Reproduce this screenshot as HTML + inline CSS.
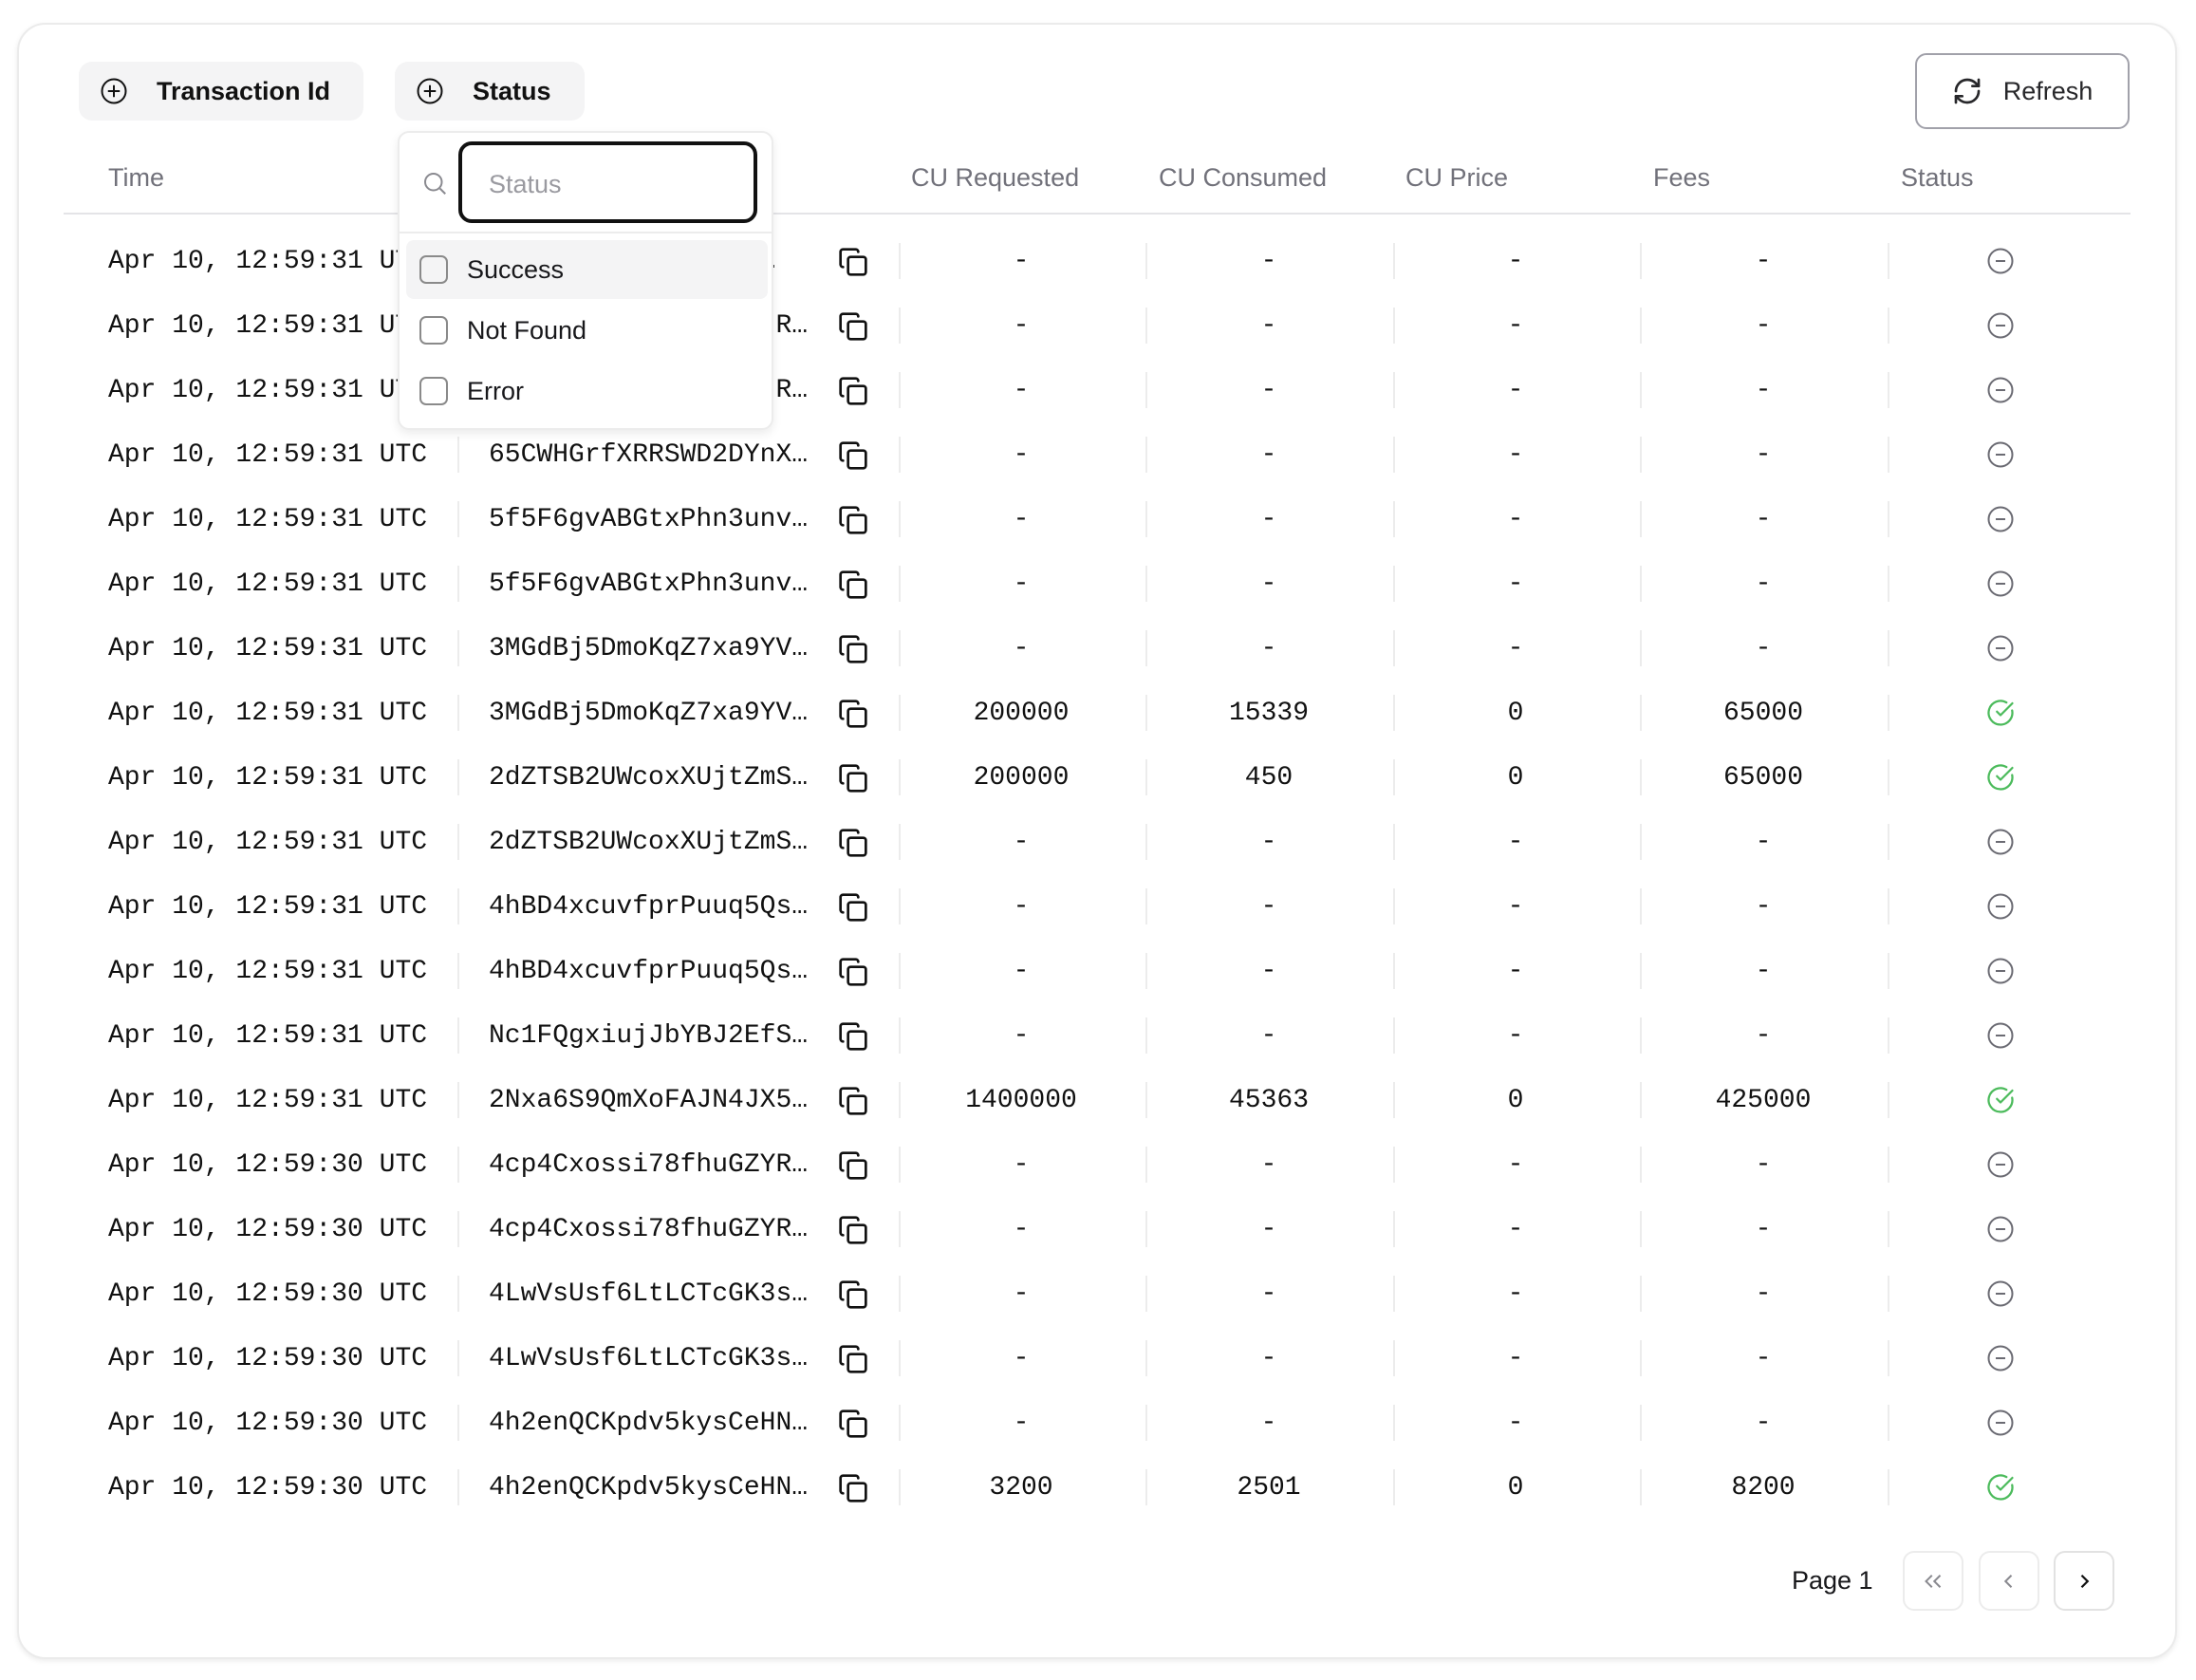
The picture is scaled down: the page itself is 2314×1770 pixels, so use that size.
<!DOCTYPE html>
<html><head><meta charset="utf-8"><style>
*{box-sizing:border-box;margin:0;padding:0}
body{width:2314px;height:1770px;background:#fff;position:relative;overflow:hidden;font-family:"Liberation Sans",sans-serif;color:#18181b}
.card{position:absolute;left:18px;top:24px;width:2276px;height:1724px;border:2px solid #ebebeb;border-radius:30px;box-shadow:0 2px 6px rgba(0,0,0,.08);background:#fff}
.chip{position:absolute;top:65px;height:62px;background:#f4f4f5;border-radius:14px;font-size:27px;font-weight:bold;display:flex;align-items:center;color:#111}
.chip svg{margin:0 30px 0 22px}
.btn{position:absolute;left:2018px;top:56px;width:226px;height:80px;border:2px solid #a1a1aa;border-radius:12px;font-size:27px;display:flex;align-items:center;justify-content:center;gap:22px;color:#27272a}
.hd{position:absolute;top:172px;font-size:27px;color:#71717a}
.hline{position:absolute;left:67px;top:224px;width:2178px;height:2px;background:#e4e4e7}
.row{position:absolute;left:0;width:2314px;height:68px}
.row span{position:absolute;top:20px;font-family:"Liberation Mono",monospace;font-size:28px;line-height:30px;color:#111}
.t{left:114px}.id{left:515px}
.c{width:200px;text-align:center}
.sep{position:absolute;top:15px;width:2px;height:38px;background:#ececec}
.row svg{position:absolute;top:19px}
.dd{position:absolute;left:419px;top:138px;width:396px;height:315px;background:#fff;border:2px solid #ececec;border-radius:12px;box-shadow:0 4px 10px rgba(0,0,0,.08)}
.inp{position:absolute;left:65px;top:9px;width:315px;height:86px;border:4px solid #111;border-radius:14px;font-size:27px;color:#9a9aa0;padding:26px 0 0 28px}
.item{position:absolute;left:7px;width:381px;height:62px;border-radius:8px;font-size:27px;display:flex;align-items:center}
.cb{width:30px;height:30px;border:2px solid #8a8a8a;border-radius:7px;margin:0 20px 0 17px}
.pb{position:absolute;top:1634px;width:64px;height:63px;border:2px solid #ececec;border-radius:12px;display:flex;align-items:center;justify-content:center}
</style></head><body>
<div class="card"></div>
<div class="chip" style="left:83px;width:300px"><svg width="30" height="30" viewBox="0 0 24 24" fill="none" stroke="#111" stroke-width="1.6"><circle cx="12" cy="12" r="10"/><path d="M12 7v10M7 12h10"/></svg>Transaction Id</div>
<div class="chip" style="left:416px;width:200px"><svg width="30" height="30" viewBox="0 0 24 24" fill="none" stroke="#111" stroke-width="1.6"><circle cx="12" cy="12" r="10"/><path d="M12 7v10M7 12h10"/></svg>Status</div>
<div class="btn"><svg width="32" height="32" viewBox="0 0 24 24" fill="none" stroke="#27272a" stroke-width="2" stroke-linecap="round" stroke-linejoin="round"><path d="M3 12a9 9 0 0 1 9-9 9.75 9.75 0 0 1 6.74 2.74L21 8"/><path d="M21 3v5h-5"/><path d="M21 12a9 9 0 0 1-9 9 9.75 9.75 0 0 1-6.74-2.74L3 16"/><path d="M8 16H3v5"/></svg>Refresh</div>
<div class="hd" style="left:114px">Time</div>
<div class="hd" style="left:960px">CU Requested</div>
<div class="hd" style="left:1221px">CU Consumed</div>
<div class="hd" style="left:1481px">CU Price</div>
<div class="hd" style="left:1742px">Fees</div>
<div class="hd" style="left:2003px">Status</div>
<div class="hline"></div>
<svg width="0" height="0" style="position:absolute"><defs>
<symbol id="cp" viewBox="0 0 24 24"><g fill="none" stroke="#111" stroke-width="2" stroke-linecap="round" stroke-linejoin="round"><rect x="8" y="8" width="14" height="14" rx="2"/><path d="M4 16c-1.1 0-2-.9-2-2V4c0-1.1.9-2 2-2h10c1.1 0 2 .9 2 2"/></g></symbol>
<symbol id="mn" viewBox="0 0 24 24"><g fill="none" stroke="#6b6b73" stroke-width="1.6"><circle cx="12" cy="12" r="10"/><path d="M8 12h8"/></g></symbol>
<symbol id="ok" viewBox="0 0 24 24"><g fill="none" stroke="#4cbb5c" stroke-width="1.8" stroke-linecap="round" stroke-linejoin="round"><path d="M21.8 10A10 10 0 1 1 17 3.3"/><path d="m9 11 3 3L22 4"/></g></symbol>
</defs></svg>
<div class="row" style="top:241px"><span class="t">Apr 10, 12:59:31 UTC</span><div class="sep" style="left:482px"></div><span class="id">4vJ9JU1bWWE2XfZPo…</span><svg style="left:883px" width="32" height="32"><use href="#cp"/></svg><div class="sep" style="left:947px"></div><span class="c" style="left:976px">-</span><div class="sep" style="left:1207px"></div><span class="c" style="left:1237px">-</span><div class="sep" style="left:1468px"></div><span class="c" style="left:1497px">-</span><div class="sep" style="left:1728px"></div><span class="c" style="left:1758px">-</span><div class="sep" style="left:1989px"></div><svg style="left:2093px" width="30" height="30"><use href="#mn"/></svg></div>
<div class="row" style="top:309px"><span class="t">Apr 10, 12:59:31 UTC</span><div class="sep" style="left:482px"></div><span class="id">65CWHGrfXRRSWD2DYnR…</span><svg style="left:883px" width="32" height="32"><use href="#cp"/></svg><div class="sep" style="left:947px"></div><span class="c" style="left:976px">-</span><div class="sep" style="left:1207px"></div><span class="c" style="left:1237px">-</span><div class="sep" style="left:1468px"></div><span class="c" style="left:1497px">-</span><div class="sep" style="left:1728px"></div><span class="c" style="left:1758px">-</span><div class="sep" style="left:1989px"></div><svg style="left:2093px" width="30" height="30"><use href="#mn"/></svg></div>
<div class="row" style="top:377px"><span class="t">Apr 10, 12:59:31 UTC</span><div class="sep" style="left:482px"></div><span class="id">65CWHGrfXRRSWD2DYnR…</span><svg style="left:883px" width="32" height="32"><use href="#cp"/></svg><div class="sep" style="left:947px"></div><span class="c" style="left:976px">-</span><div class="sep" style="left:1207px"></div><span class="c" style="left:1237px">-</span><div class="sep" style="left:1468px"></div><span class="c" style="left:1497px">-</span><div class="sep" style="left:1728px"></div><span class="c" style="left:1758px">-</span><div class="sep" style="left:1989px"></div><svg style="left:2093px" width="30" height="30"><use href="#mn"/></svg></div>
<div class="row" style="top:445px"><span class="t">Apr 10, 12:59:31 UTC</span><div class="sep" style="left:482px"></div><span class="id">65CWHGrfXRRSWD2DYnX…</span><svg style="left:883px" width="32" height="32"><use href="#cp"/></svg><div class="sep" style="left:947px"></div><span class="c" style="left:976px">-</span><div class="sep" style="left:1207px"></div><span class="c" style="left:1237px">-</span><div class="sep" style="left:1468px"></div><span class="c" style="left:1497px">-</span><div class="sep" style="left:1728px"></div><span class="c" style="left:1758px">-</span><div class="sep" style="left:1989px"></div><svg style="left:2093px" width="30" height="30"><use href="#mn"/></svg></div>
<div class="row" style="top:513px"><span class="t">Apr 10, 12:59:31 UTC</span><div class="sep" style="left:482px"></div><span class="id">5f5F6gvABGtxPhn3unv…</span><svg style="left:883px" width="32" height="32"><use href="#cp"/></svg><div class="sep" style="left:947px"></div><span class="c" style="left:976px">-</span><div class="sep" style="left:1207px"></div><span class="c" style="left:1237px">-</span><div class="sep" style="left:1468px"></div><span class="c" style="left:1497px">-</span><div class="sep" style="left:1728px"></div><span class="c" style="left:1758px">-</span><div class="sep" style="left:1989px"></div><svg style="left:2093px" width="30" height="30"><use href="#mn"/></svg></div>
<div class="row" style="top:581px"><span class="t">Apr 10, 12:59:31 UTC</span><div class="sep" style="left:482px"></div><span class="id">5f5F6gvABGtxPhn3unv…</span><svg style="left:883px" width="32" height="32"><use href="#cp"/></svg><div class="sep" style="left:947px"></div><span class="c" style="left:976px">-</span><div class="sep" style="left:1207px"></div><span class="c" style="left:1237px">-</span><div class="sep" style="left:1468px"></div><span class="c" style="left:1497px">-</span><div class="sep" style="left:1728px"></div><span class="c" style="left:1758px">-</span><div class="sep" style="left:1989px"></div><svg style="left:2093px" width="30" height="30"><use href="#mn"/></svg></div>
<div class="row" style="top:649px"><span class="t">Apr 10, 12:59:31 UTC</span><div class="sep" style="left:482px"></div><span class="id">3MGdBj5DmoKqZ7xa9YV…</span><svg style="left:883px" width="32" height="32"><use href="#cp"/></svg><div class="sep" style="left:947px"></div><span class="c" style="left:976px">-</span><div class="sep" style="left:1207px"></div><span class="c" style="left:1237px">-</span><div class="sep" style="left:1468px"></div><span class="c" style="left:1497px">-</span><div class="sep" style="left:1728px"></div><span class="c" style="left:1758px">-</span><div class="sep" style="left:1989px"></div><svg style="left:2093px" width="30" height="30"><use href="#mn"/></svg></div>
<div class="row" style="top:717px"><span class="t">Apr 10, 12:59:31 UTC</span><div class="sep" style="left:482px"></div><span class="id">3MGdBj5DmoKqZ7xa9YV…</span><svg style="left:883px" width="32" height="32"><use href="#cp"/></svg><div class="sep" style="left:947px"></div><span class="c" style="left:976px">200000</span><div class="sep" style="left:1207px"></div><span class="c" style="left:1237px">15339</span><div class="sep" style="left:1468px"></div><span class="c" style="left:1497px">0</span><div class="sep" style="left:1728px"></div><span class="c" style="left:1758px">65000</span><div class="sep" style="left:1989px"></div><svg style="left:2093px" width="30" height="30"><use href="#ok"/></svg></div>
<div class="row" style="top:785px"><span class="t">Apr 10, 12:59:31 UTC</span><div class="sep" style="left:482px"></div><span class="id">2dZTSB2UWcoxXUjtZmS…</span><svg style="left:883px" width="32" height="32"><use href="#cp"/></svg><div class="sep" style="left:947px"></div><span class="c" style="left:976px">200000</span><div class="sep" style="left:1207px"></div><span class="c" style="left:1237px">450</span><div class="sep" style="left:1468px"></div><span class="c" style="left:1497px">0</span><div class="sep" style="left:1728px"></div><span class="c" style="left:1758px">65000</span><div class="sep" style="left:1989px"></div><svg style="left:2093px" width="30" height="30"><use href="#ok"/></svg></div>
<div class="row" style="top:853px"><span class="t">Apr 10, 12:59:31 UTC</span><div class="sep" style="left:482px"></div><span class="id">2dZTSB2UWcoxXUjtZmS…</span><svg style="left:883px" width="32" height="32"><use href="#cp"/></svg><div class="sep" style="left:947px"></div><span class="c" style="left:976px">-</span><div class="sep" style="left:1207px"></div><span class="c" style="left:1237px">-</span><div class="sep" style="left:1468px"></div><span class="c" style="left:1497px">-</span><div class="sep" style="left:1728px"></div><span class="c" style="left:1758px">-</span><div class="sep" style="left:1989px"></div><svg style="left:2093px" width="30" height="30"><use href="#mn"/></svg></div>
<div class="row" style="top:921px"><span class="t">Apr 10, 12:59:31 UTC</span><div class="sep" style="left:482px"></div><span class="id">4hBD4xcuvfprPuuq5Qs…</span><svg style="left:883px" width="32" height="32"><use href="#cp"/></svg><div class="sep" style="left:947px"></div><span class="c" style="left:976px">-</span><div class="sep" style="left:1207px"></div><span class="c" style="left:1237px">-</span><div class="sep" style="left:1468px"></div><span class="c" style="left:1497px">-</span><div class="sep" style="left:1728px"></div><span class="c" style="left:1758px">-</span><div class="sep" style="left:1989px"></div><svg style="left:2093px" width="30" height="30"><use href="#mn"/></svg></div>
<div class="row" style="top:989px"><span class="t">Apr 10, 12:59:31 UTC</span><div class="sep" style="left:482px"></div><span class="id">4hBD4xcuvfprPuuq5Qs…</span><svg style="left:883px" width="32" height="32"><use href="#cp"/></svg><div class="sep" style="left:947px"></div><span class="c" style="left:976px">-</span><div class="sep" style="left:1207px"></div><span class="c" style="left:1237px">-</span><div class="sep" style="left:1468px"></div><span class="c" style="left:1497px">-</span><div class="sep" style="left:1728px"></div><span class="c" style="left:1758px">-</span><div class="sep" style="left:1989px"></div><svg style="left:2093px" width="30" height="30"><use href="#mn"/></svg></div>
<div class="row" style="top:1057px"><span class="t">Apr 10, 12:59:31 UTC</span><div class="sep" style="left:482px"></div><span class="id">Nc1FQgxiujJbYBJ2EfS…</span><svg style="left:883px" width="32" height="32"><use href="#cp"/></svg><div class="sep" style="left:947px"></div><span class="c" style="left:976px">-</span><div class="sep" style="left:1207px"></div><span class="c" style="left:1237px">-</span><div class="sep" style="left:1468px"></div><span class="c" style="left:1497px">-</span><div class="sep" style="left:1728px"></div><span class="c" style="left:1758px">-</span><div class="sep" style="left:1989px"></div><svg style="left:2093px" width="30" height="30"><use href="#mn"/></svg></div>
<div class="row" style="top:1125px"><span class="t">Apr 10, 12:59:31 UTC</span><div class="sep" style="left:482px"></div><span class="id">2Nxa6S9QmXoFAJN4JX5…</span><svg style="left:883px" width="32" height="32"><use href="#cp"/></svg><div class="sep" style="left:947px"></div><span class="c" style="left:976px">1400000</span><div class="sep" style="left:1207px"></div><span class="c" style="left:1237px">45363</span><div class="sep" style="left:1468px"></div><span class="c" style="left:1497px">0</span><div class="sep" style="left:1728px"></div><span class="c" style="left:1758px">425000</span><div class="sep" style="left:1989px"></div><svg style="left:2093px" width="30" height="30"><use href="#ok"/></svg></div>
<div class="row" style="top:1193px"><span class="t">Apr 10, 12:59:30 UTC</span><div class="sep" style="left:482px"></div><span class="id">4cp4Cxossi78fhuGZYR…</span><svg style="left:883px" width="32" height="32"><use href="#cp"/></svg><div class="sep" style="left:947px"></div><span class="c" style="left:976px">-</span><div class="sep" style="left:1207px"></div><span class="c" style="left:1237px">-</span><div class="sep" style="left:1468px"></div><span class="c" style="left:1497px">-</span><div class="sep" style="left:1728px"></div><span class="c" style="left:1758px">-</span><div class="sep" style="left:1989px"></div><svg style="left:2093px" width="30" height="30"><use href="#mn"/></svg></div>
<div class="row" style="top:1261px"><span class="t">Apr 10, 12:59:30 UTC</span><div class="sep" style="left:482px"></div><span class="id">4cp4Cxossi78fhuGZYR…</span><svg style="left:883px" width="32" height="32"><use href="#cp"/></svg><div class="sep" style="left:947px"></div><span class="c" style="left:976px">-</span><div class="sep" style="left:1207px"></div><span class="c" style="left:1237px">-</span><div class="sep" style="left:1468px"></div><span class="c" style="left:1497px">-</span><div class="sep" style="left:1728px"></div><span class="c" style="left:1758px">-</span><div class="sep" style="left:1989px"></div><svg style="left:2093px" width="30" height="30"><use href="#mn"/></svg></div>
<div class="row" style="top:1329px"><span class="t">Apr 10, 12:59:30 UTC</span><div class="sep" style="left:482px"></div><span class="id">4LwVsUsf6LtLCTcGK3s…</span><svg style="left:883px" width="32" height="32"><use href="#cp"/></svg><div class="sep" style="left:947px"></div><span class="c" style="left:976px">-</span><div class="sep" style="left:1207px"></div><span class="c" style="left:1237px">-</span><div class="sep" style="left:1468px"></div><span class="c" style="left:1497px">-</span><div class="sep" style="left:1728px"></div><span class="c" style="left:1758px">-</span><div class="sep" style="left:1989px"></div><svg style="left:2093px" width="30" height="30"><use href="#mn"/></svg></div>
<div class="row" style="top:1397px"><span class="t">Apr 10, 12:59:30 UTC</span><div class="sep" style="left:482px"></div><span class="id">4LwVsUsf6LtLCTcGK3s…</span><svg style="left:883px" width="32" height="32"><use href="#cp"/></svg><div class="sep" style="left:947px"></div><span class="c" style="left:976px">-</span><div class="sep" style="left:1207px"></div><span class="c" style="left:1237px">-</span><div class="sep" style="left:1468px"></div><span class="c" style="left:1497px">-</span><div class="sep" style="left:1728px"></div><span class="c" style="left:1758px">-</span><div class="sep" style="left:1989px"></div><svg style="left:2093px" width="30" height="30"><use href="#mn"/></svg></div>
<div class="row" style="top:1465px"><span class="t">Apr 10, 12:59:30 UTC</span><div class="sep" style="left:482px"></div><span class="id">4h2enQCKpdv5kysCeHN…</span><svg style="left:883px" width="32" height="32"><use href="#cp"/></svg><div class="sep" style="left:947px"></div><span class="c" style="left:976px">-</span><div class="sep" style="left:1207px"></div><span class="c" style="left:1237px">-</span><div class="sep" style="left:1468px"></div><span class="c" style="left:1497px">-</span><div class="sep" style="left:1728px"></div><span class="c" style="left:1758px">-</span><div class="sep" style="left:1989px"></div><svg style="left:2093px" width="30" height="30"><use href="#mn"/></svg></div>
<div class="row" style="top:1533px"><span class="t">Apr 10, 12:59:30 UTC</span><div class="sep" style="left:482px"></div><span class="id">4h2enQCKpdv5kysCeHN…</span><svg style="left:883px" width="32" height="32"><use href="#cp"/></svg><div class="sep" style="left:947px"></div><span class="c" style="left:976px">3200</span><div class="sep" style="left:1207px"></div><span class="c" style="left:1237px">2501</span><div class="sep" style="left:1468px"></div><span class="c" style="left:1497px">0</span><div class="sep" style="left:1728px"></div><span class="c" style="left:1758px">8200</span><div class="sep" style="left:1989px"></div><svg style="left:2093px" width="30" height="30"><use href="#ok"/></svg></div>

<div class="dd">
<svg style="position:absolute;left:22px;top:38px" width="30" height="30" viewBox="0 0 24 24" fill="none" stroke="#8a8a90" stroke-width="1.6"><circle cx="11" cy="11" r="7"/><path d="m21 21-4.5-4.5"/></svg>
<div class="inp" style="left:62px">Status</div>
<div style="position:absolute;left:0;top:104px;width:392px;height:2px;background:#ececec"></div>
<div class="item" style="top:113px;background:#f4f4f5"><div class="cb" style="margin-left:14px"></div>Success</div>
<div class="item" style="top:177px"><div class="cb" style="margin-left:14px"></div>Not Found</div>
<div class="item" style="top:241px"><div class="cb" style="margin-left:14px"></div>Error</div>
</div>

<div style="position:absolute;left:1888px;top:1650px;font-size:27px;font-weight:500">Page 1</div>
<div class="pb" style="left:2005px"><svg width="30" height="30" viewBox="0 0 24 24" fill="none" stroke="#8a8a90" stroke-width="1.6"><path d="M11 7l-5 5 5 5M18 7l-5 5 5 5"/></svg></div>
<div class="pb" style="left:2085px"><svg width="30" height="30" viewBox="0 0 24 24" fill="none" stroke="#8a8a90" stroke-width="1.6"><path d="M14 7l-5 5 5 5"/></svg></div>
<div class="pb" style="left:2164px;border-color:#e2e2e2"><svg width="30" height="30" viewBox="0 0 24 24" fill="none" stroke="#111" stroke-width="1.8"><path d="M10 7l5 5-5 5"/></svg></div>
</body></html>
